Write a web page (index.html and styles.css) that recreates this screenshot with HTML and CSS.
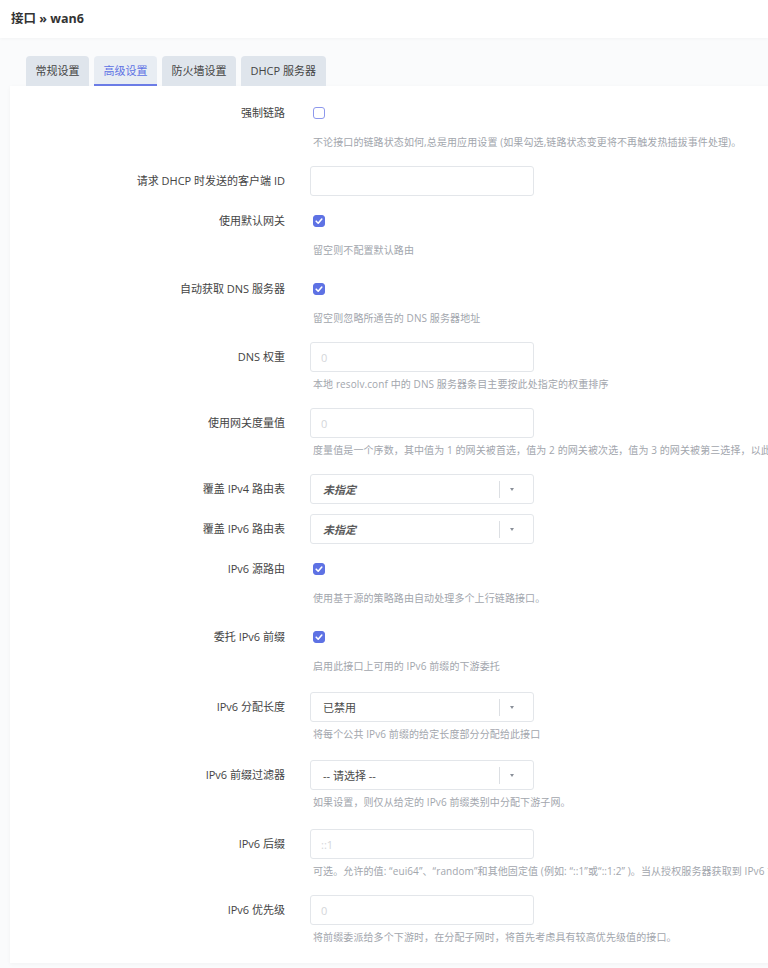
FILE: index.html
```html
<!DOCTYPE html>
<html lang="zh-CN">
<head>
<meta charset="utf-8">
<title>接口 » wan6</title>
<link rel="stylesheet" href="styles.css">
</head>
<body>
<div class="page">
  <header class="topbar">
    <h2 class="title">接口 » wan6</h2>
  </header>
  <main class="main">
    <ul class="tabs">
      <li class="tab">常规设置</li>
      <li class="tab active">高级设置</li>
      <li class="tab">防火墙设置</li>
      <li class="tab">DHCP 服务器</li>
    </ul>
    <section class="card">
      <div class="row check">
        <label class="label">强制链路</label>
        <div class="field">
          <div class="control"><span class="cbox"></span></div>
          <div class="desc">不论接口的链路状态如何,总是用应用设置 (如果勾选,链路状态变更将不再触发热插拔事件处理)。</div>
        </div>
      </div>
      <div class="row">
        <label class="label">请求 DHCP 时发送的客户端 ID</label>
        <div class="field">
          <div class="control"><div class="input"></div></div>
        </div>
      </div>
      <div class="row check">
        <label class="label">使用默认网关</label>
        <div class="field">
          <div class="control"><span class="cbox on"><svg viewBox="0 0 12 12" width="12" height="12"><polyline points="3.2,6.2 5.2,8.2 8.8,4" fill="none" stroke="#fff" stroke-width="1.6" stroke-linecap="round" stroke-linejoin="round"/></svg></span></div>
          <div class="desc">留空则不配置默认路由</div>
        </div>
      </div>
      <div class="row check">
        <label class="label">自动获取 DNS 服务器</label>
        <div class="field">
          <div class="control"><span class="cbox on"><svg viewBox="0 0 12 12" width="12" height="12"><polyline points="3.2,6.2 5.2,8.2 8.8,4" fill="none" stroke="#fff" stroke-width="1.6" stroke-linecap="round" stroke-linejoin="round"/></svg></span></div>
          <div class="desc">留空则忽略所通告的 DNS 服务器地址</div>
        </div>
      </div>
      <div class="row">
        <label class="label">DNS 权重</label>
        <div class="field">
          <div class="control"><div class="input"><span class="ph">0</span></div></div>
          <div class="desc">本地 resolv.conf 中的 DNS 服务器条目主要按此处指定的权重排序</div>
        </div>
      </div>
      <div class="row">
        <label class="label">使用网关度量值</label>
        <div class="field">
          <div class="control"><div class="input"><span class="ph">0</span></div></div>
          <div class="desc">度量值是一个序数，其中值为 1 的网关被首选，值为 2 的网关被次选，值为 3 的网关被第三选择，以此类推。</div>
        </div>
      </div>
      <div class="row">
        <label class="label">覆盖 IPv4 路由表</label>
        <div class="field">
          <div class="control"><div class="select"><span class="val em">未指定</span><span class="sep"></span><span class="arrow"></span></div></div>
        </div>
      </div>
      <div class="row">
        <label class="label">覆盖 IPv6 路由表</label>
        <div class="field">
          <div class="control"><div class="select"><span class="val em">未指定</span><span class="sep"></span><span class="arrow"></span></div></div>
        </div>
      </div>
      <div class="row check">
        <label class="label">IPv6 源路由</label>
        <div class="field">
          <div class="control"><span class="cbox on"><svg viewBox="0 0 12 12" width="12" height="12"><polyline points="3.2,6.2 5.2,8.2 8.8,4" fill="none" stroke="#fff" stroke-width="1.6" stroke-linecap="round" stroke-linejoin="round"/></svg></span></div>
          <div class="desc">使用基于源的策略路由自动处理多个上行链路接口。</div>
        </div>
      </div>
      <div class="row check loose">
        <label class="label">委托 IPv6 前缀</label>
        <div class="field">
          <div class="control"><span class="cbox on"><svg viewBox="0 0 12 12" width="12" height="12"><polyline points="3.2,6.2 5.2,8.2 8.8,4" fill="none" stroke="#fff" stroke-width="1.6" stroke-linecap="round" stroke-linejoin="round"/></svg></span></div>
          <div class="desc">启用此接口上可用的 IPv6 前缀的下游委托</div>
        </div>
      </div>
      <div class="row loose">
        <label class="label">IPv6 分配长度</label>
        <div class="field">
          <div class="control"><div class="select"><span class="val">已禁用</span><span class="sep"></span><span class="arrow"></span></div></div>
          <div class="desc">将每个公共 IPv6 前缀的给定长度部分分配给此接口</div>
        </div>
      </div>
      <div class="row looser">
        <label class="label">IPv6 前缀过滤器</label>
        <div class="field">
          <div class="control"><div class="select"><span class="val">-- 请选择 --</span><span class="sep"></span><span class="arrow"></span></div></div>
          <div class="desc">如果设置，则仅从给定的 IPv6 前缀类别中分配下游子网。</div>
        </div>
      </div>
      <div class="row">
        <label class="label">IPv6 后缀</label>
        <div class="field">
          <div class="control"><div class="input"><span class="ph">::1</span></div></div>
          <div class="desc">可选。允许的值: “eui64”、“random”和其他固定值 (例如: “::1”或“::1:2” )。当从授权服务器获取到 IPv6 前缀时，使用后缀形成此接口的 IPv6 地址。</div>
        </div>
      </div>
      <div class="row">
        <label class="label">IPv6 优先级</label>
        <div class="field">
          <div class="control"><div class="input"><span class="ph">0</span></div></div>
          <div class="desc">将前缀委派给多个下游时，在分配子网时，将首先考虑具有较高优先级值的接口。</div>
        </div>
      </div>
    </section>
  </main>
</div>
</body>
</html>
```

FILE: styles.css
```css
* { box-sizing: border-box; }
html, body { margin: 0; padding: 0; }
body {
  background: #fafbfc;
  font-family: "Open Sans", "Noto Sans CJK SC", sans-serif;
  color: #444;
  width: 768px;
  height: 968px;
  overflow: hidden;
}
.page { width: 768px; height: 968px; overflow: hidden; }

.topbar {
  height: 38px;
  background: #fff;
  box-shadow: 0 1px 3px rgba(0, 0, 0, 0.035);
  display: flex;
  align-items: center;
  padding-left: 11px;
}
.title {
  margin: 0;
  font-size: 12.5px;
  font-weight: 700;
  color: #333;
  line-height: 1;
}

.main { padding: 18px 0 0 10px; }

.tabs {
  list-style: none;
  margin: 0;
  padding: 0 0 0 16px;
  display: flex;
  gap: 5px;
}
.tab {
  height: 30px;
  line-height: 30px;
  padding: 0 9.5px;
  font-size: 11px;
  color: #444;
  background: #dfe5ec;
  border-radius: 4px 4px 0 0;
  white-space: nowrap;
}
.tab.active {
  background: #e8edf3;
  color: #5e72e4;
  box-shadow: inset 0 -2px 0 #6b7ce6;
}

.card {
  background: #fff;
  margin-right: -40px;
  padding: 12px 0 2px;
  box-shadow: 0 1px 4px rgba(0, 0, 0, 0.04);
  overflow: hidden;
}

.row {
  display: flex;
  align-items: flex-start;
  margin-bottom: 10px;
}
.row.loose { margin-bottom: 12px; }
.row.looser { margin-bottom: 13px; }
.label {
  width: 276px;
  flex: none;
  text-align: right;
  padding-right: 1px;
  font-size: 11px;
  line-height: 30px;
  height: 30px;
  color: #444;
  white-space: nowrap;
}
.field {
  margin-left: 24px;
  flex: 1;
  min-width: 0;
}
.control {
  height: 30px;
  display: flex;
  align-items: center;
}
.desc {
  margin-top: 4px;
  margin-bottom: 6px;
  font-size: 10px;
  letter-spacing: 0.1px;
  line-height: 16px;
  color: #a2a6ad;
  white-space: nowrap;
  padding-left: 3px;
}
.row.check .desc { margin-top: 6px; }

.cbox {
  width: 12px;
  height: 12px;
  margin-left: 3px;
  border: 1px solid #8d98ec;
  border-radius: 3px;
  background: #fff;
  display: flex;
  align-items: center;
  justify-content: center;
}
.cbox.on {
  background: #5e72e4;
  border-color: #5e72e4;
}
.cbox svg { display: block; flex: none; }

.input, .select {
  width: 224px;
  height: 30px;
  border: 1px solid #e3e6ea;
  border-radius: 3px;
  background: #fff;
  font-size: 11px;
  display: flex;
  align-items: center;
}
.input { padding-left: 10px; }
.ph { color: #d4d6da; }

.select { padding-left: 12px; padding-right: 9px; }
.val { flex: 1; color: #4a4a4a; }
.val.em { font-style: italic; font-weight: 700; color: #5c5c5c; }
.sep {
  width: 1px;
  height: 17px;
  background: #dcdfe3;
  flex: none;
}
.arrow {
  width: 24px;
  flex: none;
  display: flex;
  justify-content: center;
}
.arrow::before {
  content: "";
  width: 0;
  height: 0;
  border-left: 2.5px solid transparent;
  border-right: 2.5px solid transparent;
  border-top: 3.5px solid #8a9099;
}
```
